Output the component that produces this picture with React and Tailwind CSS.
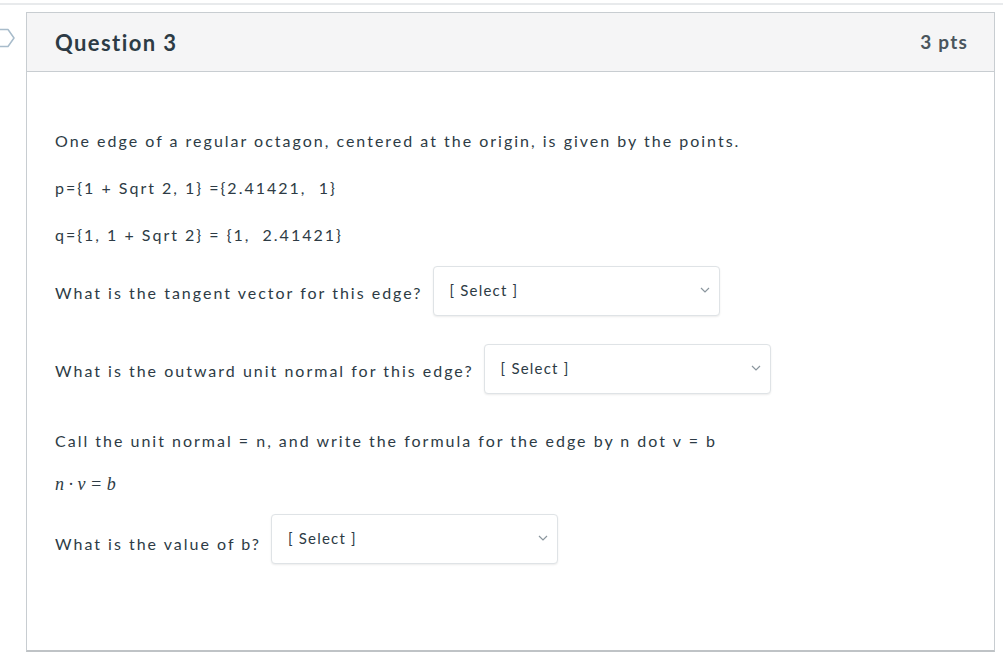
import React from 'react';

const Chevron = () => (
  <svg width="10" height="6" viewBox="0 0 10 6" className="text-[#8b969e]">
    <path d="M1 1l4 4 4-4" fill="none" stroke="currentColor" strokeWidth="1.2" />
  </svg>
);

function Dropdown({ className = '' }) {
  return (
    <div className={`w-[287px] h-[50px] border border-[#dfe3e6] rounded-[4px] shadow-[0_1px_2px_rgba(0,0,0,0.08)] bg-white flex items-start justify-between pl-[16px] pr-[9px] pt-[13px] ${className}`}>
      <span className="text-[15px] leading-[20px] tracking-[1.2px] text-[#2d3b45]">[ Select ]</span>
      <span className="mt-[7px]"><Chevron /></span>
    </div>
  );
}

function Row({ label, pt, className = '' }) {
  return (
    <div className={`flex items-start ${className}`}>
      <span className={`leading-[24px] ${pt}`}>{label}</span>
      <Dropdown className="ml-[10px]" />
    </div>
  );
}

export default function App() {
  return (
    <div className="relative w-[1003px] h-[665px] bg-white overflow-hidden text-[#2d3b45] font-['Lato','Liberation_Sans',sans-serif]">
      <div className="h-[3px]" />
      <div className="h-[2px] bg-[#e8eaec]" />

      <svg className="absolute left-0 top-[28px]" width="16" height="20" viewBox="0 0 16 20">
        <path d="M-4 1.5h12l6 8.5-6 8.5h-12" fill="none" stroke="#a8bccb" strokeWidth="1.5" strokeLinejoin="round" />
      </svg>

      <div className="ml-[26px] mt-[7px] w-[969px] h-[640px] border border-[#c8cdd1] border-b-2 border-b-[#bfc3c6] flex flex-col">
        <div className="h-[59px] bg-[#f5f5f6] border-b border-[#c8cdd1] flex items-center justify-between pl-[28px] pr-[26px]">
          <span className="text-[22px] font-bold tracking-[1.4px]">Question 3</span>
          <span className="text-[19px] font-bold tracking-[1.2px] text-[#4a555d]">3 pts</span>
        </div>

        <div className="pt-[57px] px-[28px] text-[16px] tracking-[2px]">
          <p className="leading-[24px]">One edge of a regular octagon, centered at the origin, is given by the points.</p>
          <p className="leading-[24px] mt-[23px]">p=&#123;1 + Sqrt 2, 1&#125; =&#123;2.41421,&nbsp; 1&#125;</p>
          <p className="leading-[24px] mt-[23px]">q=&#123;1, 1 + Sqrt 2&#125; = &#123;1,&nbsp; 2.41421&#125;</p>

          <Row label="What is the tangent vector for this edge?" pt="pt-[15px]" className="mt-[19px]" />
          <Row label="What is the outward unit normal for this edge?" pt="pt-[15px]" className="mt-[28px]" />

          <p className="leading-[24px] mt-[35px]">Call the unit normal = n, and write the formula for the edge by n dot v = b</p>
          <p className="leading-[24px] mt-[19px] text-[18px] tracking-normal font-['Liberation_Serif',serif] italic">n &middot; v = b</p>

          <Row label="What is the value of b?" pt="pt-[18px]" className="mt-[18px]" />
        </div>
      </div>
    </div>
  );
}
